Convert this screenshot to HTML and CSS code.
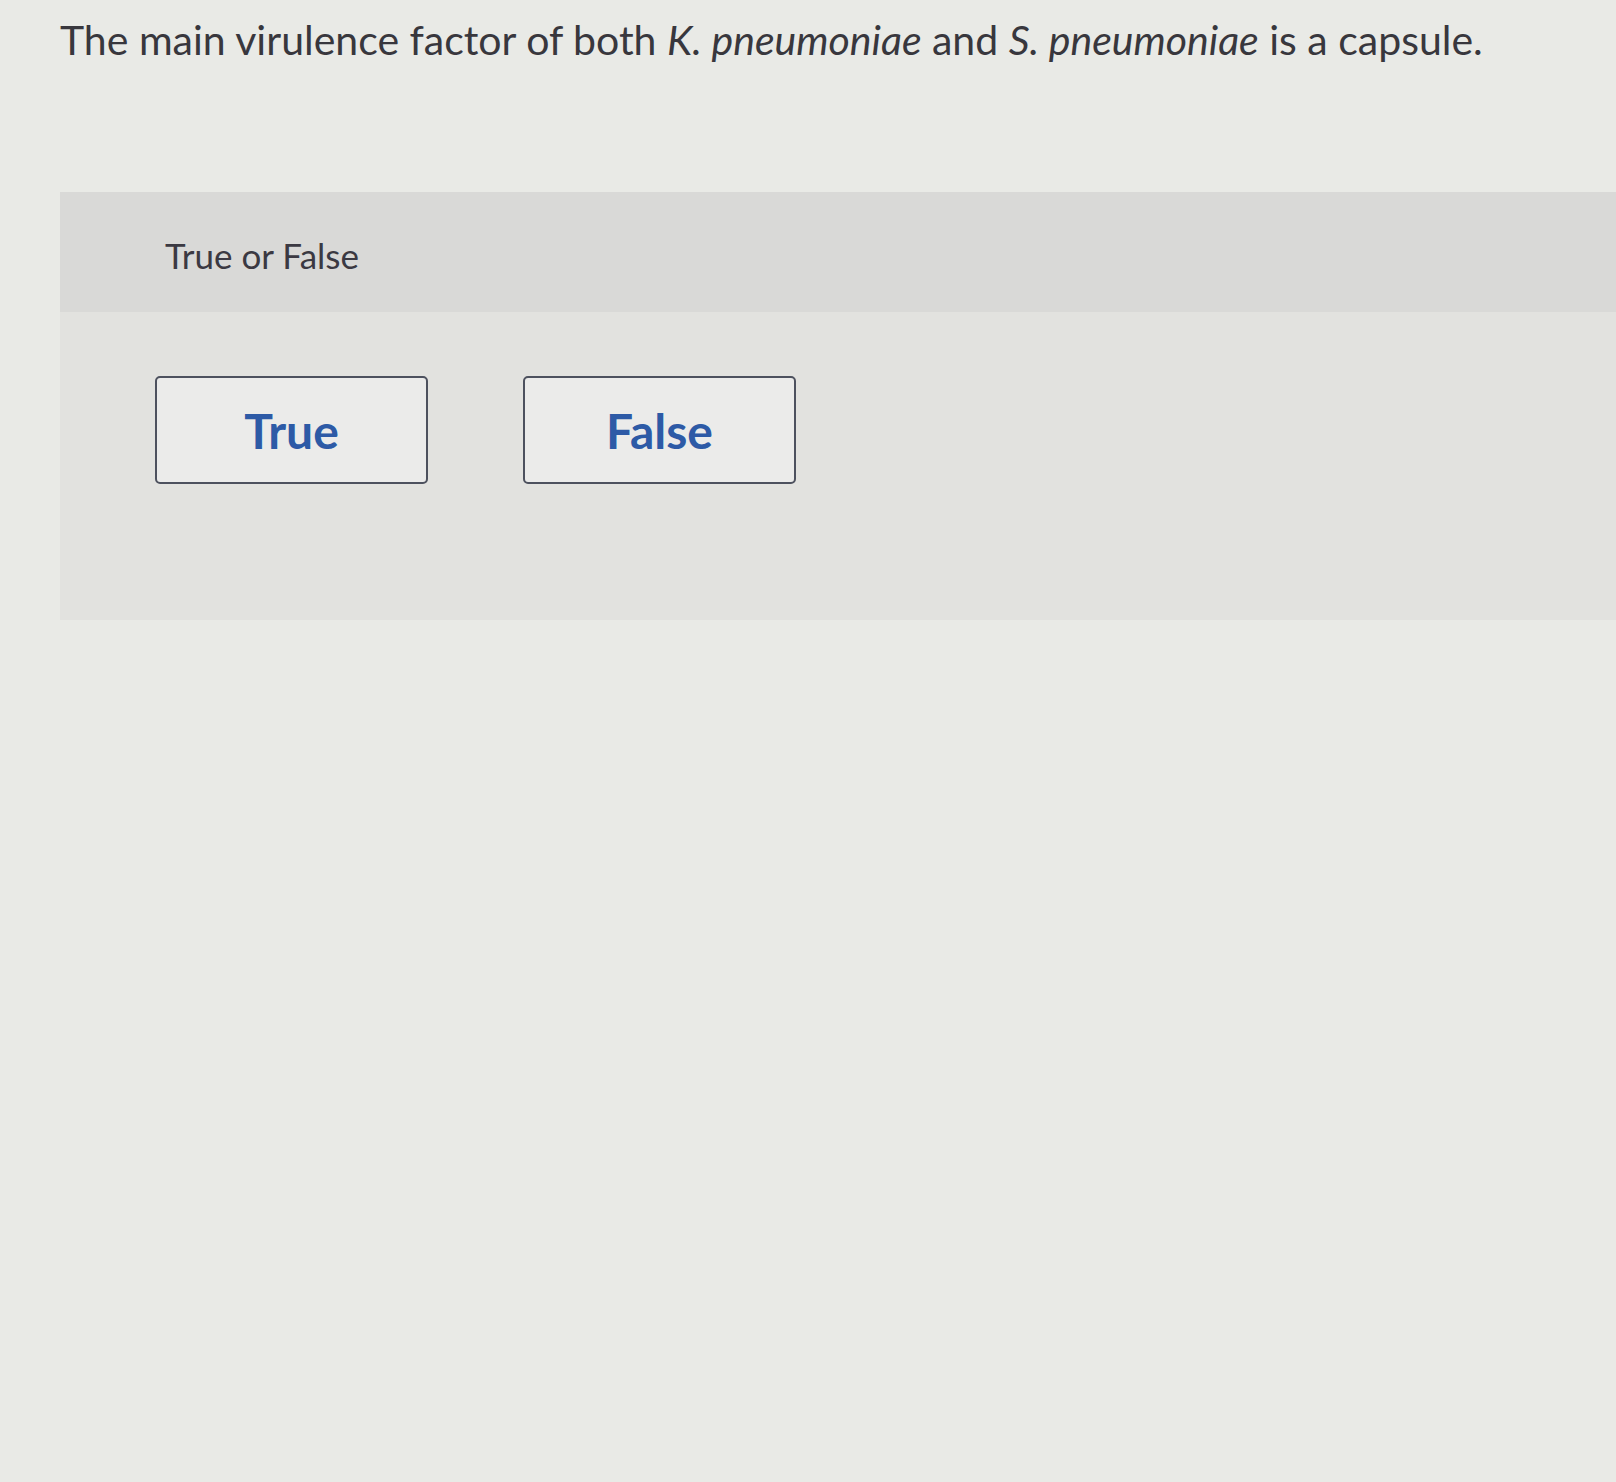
FILE: index.html
```html
<!DOCTYPE html>
<html lang="en">

<head>
    <meta charset="UTF-8">
    <meta name="viewport" content="width=device-width, initial-scale=1.0">
    <title>True or False</title>
    <link rel="stylesheet" href="styles.css">
</head>

<body>
    <div class="question">
        <p class="prompt">The main virulence factor of both <em>K. pneumoniae</em> and <em>S. pneumoniae</em> is a capsule.</p>

        <div class="answer-panel">
            <div class="answer-header">True or False</div>
            <div class="answer-body">
                <button type="button" class="choice">True</button>
                <button type="button" class="choice">False</button>
            </div>
        </div>
    </div>
</body>

</html>
```

FILE: styles.css
```css
html,
body {
    margin: 0;
    padding: 0;
}

body {
    font-family: Lato, "Open Sans", Arial, sans-serif;
    background-color: #e9eae6;
    color: #35343a;
    min-height: 1482px;
}

.question {
    padding: 14px 0 0 60px;
}

.prompt {
    margin: 0;
    font-size: 41px;
    line-height: 52px;
    color: #38373d;
}

.answer-panel {
    margin-top: 126px;
    background-color: #e2e2df;
}

.answer-header {
    height: 120px;
    box-sizing: border-box;
    padding: 41px 0 0 105px;
    font-size: 35px;
    line-height: 44px;
    background-color: #d9d9d7;
    color: #3b3942;
}

.answer-body {
    display: flex;
    gap: 95px;
    padding: 64px 0 136px 95px;
}

.choice {
    width: 273px;
    height: 108px;
    background-color: #ebebea;
    border: 2px solid #4d515e;
    border-radius: 5px;
    font-family: inherit;
    font-size: 48px;
    font-weight: 700;
    color: #2d5aa6;
    cursor: pointer;
}

.choice:hover {
    background-color: #f2f2f1;
}
```
